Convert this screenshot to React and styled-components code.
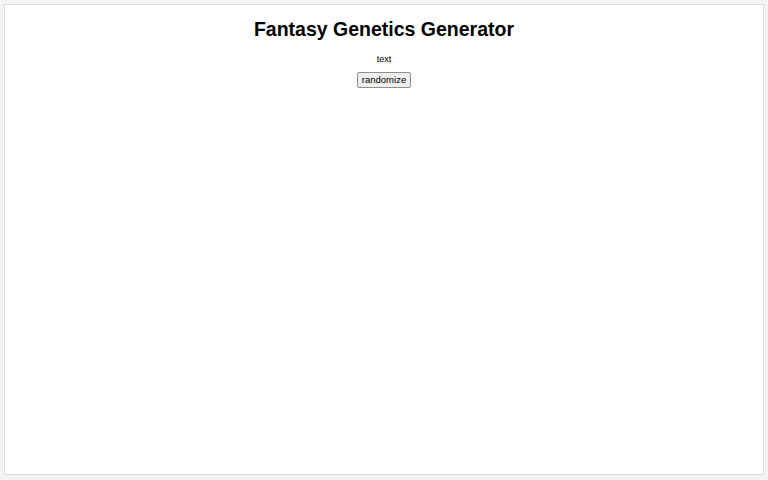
import styled, { createGlobalStyle } from "styled-components";

const Global = createGlobalStyle`
  html, body {
    margin: 0;
    padding: 0;
    background: #f3f3f3;
    font-family: "Liberation Sans", Arial, sans-serif;
  }
`;

const Page = styled.div`
  box-sizing: border-box;
  height: 480px;
  padding: 4px 4px 5px 4px;
`;

const Panel = styled.main`
  box-sizing: border-box;
  height: 100%;
  background: #fff;
  border: 1px solid #dcdcdc;
  display: flex;
  flex-direction: column;
  align-items: center;
  padding-top: 13px;
`;

const Title = styled.h1`
  margin: 0;
  font-size: 19.5px;
  font-weight: 700;
  color: #000;
  line-height: 22px;
`;

const Text = styled.p`
  margin: 14px 0 0;
  font-size: 9px;
  line-height: 11px;
  color: #000;
`;

const Button = styled.button`
  margin-top: 7px;
  font-family: "Liberation Sans", Arial, sans-serif;
  font-size: 9.5px;
  line-height: 11px;
  padding: 1px 4px 2px;
  background: #efefef;
  border: 1px solid #8f8f8f;
  border-radius: 2px;
  color: #000;
`;

const App = () => {
  return (
    <>
      <Global />
      <Page>
        <Panel>
          <Title>Fantasy Genetics Generator</Title>
          <Text>text</Text>
          <Button>randomize</Button>
        </Panel>
      </Page>
    </>
  );
};

export default App;
